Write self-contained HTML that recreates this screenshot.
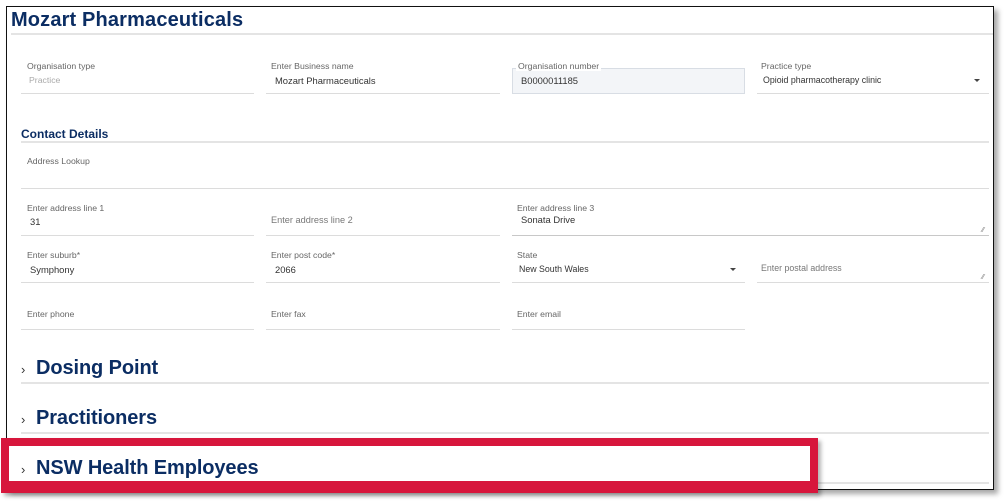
<!DOCTYPE html>
<html><head><style>
body{margin:0;width:1005px;height:503px;background:#fff;position:relative;overflow:hidden;font-family:"Liberation Sans",Arial,sans-serif}
.frame{position:absolute;left:6px;top:6px;width:986px;height:482px;border:1.5px solid #111;box-shadow:4px 4px 5px rgba(0,0,0,.35);background:#fff}
.a{position:absolute}
.t{font-weight:bold;color:#0b2d63}
.hl{position:absolute;height:2px;background:#e4e4e4}
.ul{position:absolute;height:1px;background:#dcdcdc}
.lb{position:absolute;font-size:8.7px;color:#666}
.v{position:absolute;font-size:9.4px;color:#333}
.ph{position:absolute;font-size:9.2px;color:#777}
.car{position:absolute;width:0;height:0;border-left:3px solid transparent;border-right:3px solid transparent;border-top:3px solid #444}
.chev{display:inline-block;width:15px;font-size:13px;font-weight:normal;color:#333}
.h{font-size:20px;letter-spacing:-0.1px}
</style></head><body>
<div class="frame"></div>
<div class="a t" style="left:11px;top:9px;font-size:20px;letter-spacing:0.15px">Mozart Pharmaceuticals</div>
<div class="hl" style="left:11px;top:33px;width:982px"></div>

<div class="lb" style="left:27px;top:61px">Organisation type</div>
<div class="lb" style="left:29px;top:75px;color:#aaa">Practice</div>
<div class="ul" style="left:21px;top:93px;width:233px"></div>
<div class="lb" style="left:271px;top:61px">Enter Business name</div>
<div class="v" style="left:275px;top:75px">Mozart Pharmaceuticals</div>
<div class="ul" style="left:266px;top:93px;width:234px"></div>
<div class="a" style="left:512px;top:68px;width:231px;height:24px;background:#f3f5f8;border:1px solid #d8dde4"></div>
<div class="lb" style="left:516px;top:61px;background:#fff;padding:0 2px">Organisation number</div>
<div class="v" style="left:521px;top:75px">B0000011185</div>
<div class="lb" style="left:761px;top:61px">Practice type</div>
<div class="v" style="left:763px;top:75px;font-size:8.8px">Opioid pharmacotherapy clinic</div>
<div class="car" style="left:974px;top:79px"></div>
<div class="ul" style="left:757px;top:93px;width:232px"></div>

<div class="a t" style="left:21px;top:127px;font-size:12px">Contact Details</div>
<div class="hl" style="left:21px;top:141px;width:968px"></div>
<div class="lb" style="left:27px;top:156px">Address Lookup</div>
<div class="ul" style="left:21px;top:188px;width:968px"></div>

<div class="lb" style="left:27px;top:203px">Enter address line 1</div>
<div class="v" style="left:30px;top:216px">31</div>
<div class="ul" style="left:21px;top:235px;width:233px"></div>
<div class="ph" style="left:271px;top:215px">Enter address line 2</div>
<div class="ul" style="left:266px;top:235px;width:234px"></div>
<div class="lb" style="left:517px;top:203px">Enter address line 3</div>
<div class="v" style="left:521px;top:214px">Sonata Drive</div>
<div class="ul" style="left:512px;top:235px;width:477px;background:#c8c8c8"></div>
<div class="a" style="left:982px;top:227px;font-size:7px;color:#777">⁄⁄</div>

<div class="lb" style="left:27px;top:250px">Enter suburb*</div>
<div class="v" style="left:30px;top:264px">Symphony</div>
<div class="ul" style="left:21px;top:282px;width:233px"></div>
<div class="lb" style="left:271px;top:250px">Enter post code*</div>
<div class="v" style="left:275px;top:264px">2066</div>
<div class="ul" style="left:266px;top:282px;width:234px"></div>
<div class="lb" style="left:517px;top:250px">State</div>
<div class="v" style="left:519px;top:264px;font-size:8.8px">New South Wales</div>
<div class="car" style="left:730px;top:268px"></div>
<div class="ul" style="left:512px;top:282px;width:233px"></div>
<div class="ph" style="left:761px;top:263px;font-size:8.8px">Enter postal address</div>
<div class="a" style="left:982px;top:274px;font-size:7px;color:#777">⁄⁄</div>
<div class="ul" style="left:757px;top:282px;width:232px"></div>

<div class="lb" style="left:27px;top:309px">Enter phone</div>
<div class="ul" style="left:21px;top:329px;width:233px"></div>
<div class="lb" style="left:271px;top:309px">Enter fax</div>
<div class="ul" style="left:266px;top:329px;width:234px"></div>
<div class="lb" style="left:517px;top:309px">Enter email</div>
<div class="ul" style="left:512px;top:329px;width:233px"></div>

<div class="a t h" style="left:21px;top:357px"><span class="chev">›</span>Dosing Point</div>
<div class="hl" style="left:21px;top:382px;width:968px"></div>
<div class="a t h" style="left:21px;top:407px"><span class="chev">›</span>Practitioners</div>
<div class="hl" style="left:21px;top:432px;width:968px"></div>
<div class="hl" style="left:21px;top:482px;width:968px"></div>

<div class="a" style="left:1px;top:438px;width:801px;height:35px;border:8px solid #d7163c;border-bottom-width:12px;background:#fff;box-shadow:3px 3px 4px rgba(0,0,0,.3)"></div>
<div class="a t h" style="left:21px;top:457px"><span class="chev">›</span>NSW Health Employees</div>
</body></html>
